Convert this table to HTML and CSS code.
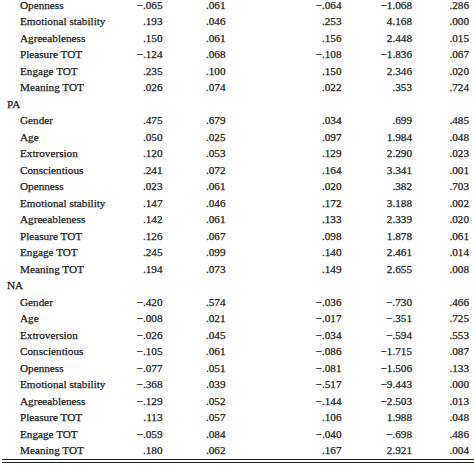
FILE: index.html
```html
<!DOCTYPE html>
<html>
<head>
<meta charset="utf-8">
<link rel="stylesheet" href="styles.css">
</head>
<body>
<div class="table">
  <div class="row"><span class="label">Openness</span><span class="num">−.065</span><span class="num">.061</span><span class="num">−.064</span><span class="num">−1.068</span><span class="num">.286</span></div>
  <div class="row"><span class="label">Emotional stability</span><span class="num">.193</span><span class="num">.046</span><span class="num">.253</span><span class="num">4.168</span><span class="num">.000</span></div>
  <div class="row"><span class="label">Agreeableness</span><span class="num">.150</span><span class="num">.061</span><span class="num">.156</span><span class="num">2.448</span><span class="num">.015</span></div>
  <div class="row"><span class="label">Pleasure TOT</span><span class="num">−.124</span><span class="num">.068</span><span class="num">−.108</span><span class="num">−1.836</span><span class="num">.067</span></div>
  <div class="row"><span class="label">Engage TOT</span><span class="num">.235</span><span class="num">.100</span><span class="num">.150</span><span class="num">2.346</span><span class="num">.020</span></div>
  <div class="row"><span class="label">Meaning TOT</span><span class="num">.026</span><span class="num">.074</span><span class="num">.022</span><span class="num">.353</span><span class="num">.724</span></div>
  <div class="row section"><span class="head">PA</span></div>
  <div class="row"><span class="label">Gender</span><span class="num">.475</span><span class="num">.679</span><span class="num">.034</span><span class="num">.699</span><span class="num">.485</span></div>
  <div class="row"><span class="label">Age</span><span class="num">.050</span><span class="num">.025</span><span class="num">.097</span><span class="num">1.984</span><span class="num">.048</span></div>
  <div class="row"><span class="label">Extroversion</span><span class="num">.120</span><span class="num">.053</span><span class="num">.129</span><span class="num">2.290</span><span class="num">.023</span></div>
  <div class="row"><span class="label">Conscientious</span><span class="num">.241</span><span class="num">.072</span><span class="num">.164</span><span class="num">3.341</span><span class="num">.001</span></div>
  <div class="row"><span class="label">Openness</span><span class="num">.023</span><span class="num">.061</span><span class="num">.020</span><span class="num">.382</span><span class="num">.703</span></div>
  <div class="row"><span class="label">Emotional stability</span><span class="num">.147</span><span class="num">.046</span><span class="num">.172</span><span class="num">3.188</span><span class="num">.002</span></div>
  <div class="row"><span class="label">Agreeableness</span><span class="num">.142</span><span class="num">.061</span><span class="num">.133</span><span class="num">2.339</span><span class="num">.020</span></div>
  <div class="row"><span class="label">Pleasure TOT</span><span class="num">.126</span><span class="num">.067</span><span class="num">.098</span><span class="num">1.878</span><span class="num">.061</span></div>
  <div class="row"><span class="label">Engage TOT</span><span class="num">.245</span><span class="num">.099</span><span class="num">.140</span><span class="num">2.461</span><span class="num">.014</span></div>
  <div class="row"><span class="label">Meaning TOT</span><span class="num">.194</span><span class="num">.073</span><span class="num">.149</span><span class="num">2.655</span><span class="num">.008</span></div>
  <div class="row section"><span class="head">NA</span></div>
  <div class="row"><span class="label">Gender</span><span class="num">−.420</span><span class="num">.574</span><span class="num">−.036</span><span class="num">−.730</span><span class="num">.466</span></div>
  <div class="row"><span class="label">Age</span><span class="num">−.008</span><span class="num">.021</span><span class="num">−.017</span><span class="num">−.351</span><span class="num">.725</span></div>
  <div class="row"><span class="label">Extroversion</span><span class="num">−.026</span><span class="num">.045</span><span class="num">−.034</span><span class="num">−.594</span><span class="num">.553</span></div>
  <div class="row"><span class="label">Conscientious</span><span class="num">−.105</span><span class="num">.061</span><span class="num">−.086</span><span class="num">−1.715</span><span class="num">.087</span></div>
  <div class="row"><span class="label">Openness</span><span class="num">−.077</span><span class="num">.051</span><span class="num">−.081</span><span class="num">−1.506</span><span class="num">.133</span></div>
  <div class="row"><span class="label">Emotional stability</span><span class="num">−.368</span><span class="num">.039</span><span class="num">−.517</span><span class="num">−9.443</span><span class="num">.000</span></div>
  <div class="row"><span class="label">Agreeableness</span><span class="num">−.129</span><span class="num">.052</span><span class="num">−.144</span><span class="num">−2.503</span><span class="num">.013</span></div>
  <div class="row"><span class="label">Pleasure TOT</span><span class="num">.113</span><span class="num">.057</span><span class="num">.106</span><span class="num">1.988</span><span class="num">.048</span></div>
  <div class="row"><span class="label">Engage TOT</span><span class="num">−.059</span><span class="num">.084</span><span class="num">−.040</span><span class="num">−.698</span><span class="num">.486</span></div>
  <div class="row"><span class="label">Meaning TOT</span><span class="num">.180</span><span class="num">.062</span><span class="num">.167</span><span class="num">2.921</span><span class="num">.004</span></div>
</div>
</body>
</html>
```

FILE: styles.css
```css
html, body {
  margin: 0;
  padding: 0;
  background: #ffffff;
}
body {
  font-family: "Liberation Serif", "Times New Roman", serif;
  font-size: 11.2px;
  color: #1c1c1c;
  -webkit-text-stroke: 0.25px #1c1c1c;
  overflow: hidden;
}
.table {
  margin-top: -3.5px;
  padding-left: 5px;
  border-bottom: 4px double #222;
  margin-left: 2px;
}
.row {
  display: grid;
  grid-template-columns: 113px 42.5px 63px 116px 70.5px 57px;
  height: 16.5px;
  line-height: 16.5px;
  white-space: nowrap;
}
.label {
  padding-left: 13px;
}
.head {
  padding-left: 0;
}
.num {
  text-align: right;
}
```
